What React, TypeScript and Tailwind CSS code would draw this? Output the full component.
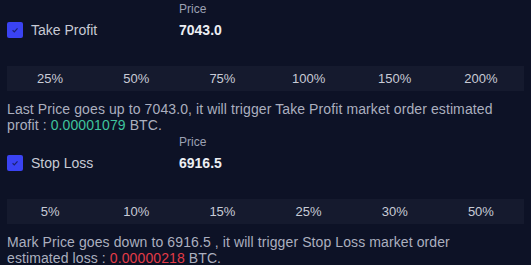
import React from "react";

function Check() {
  return (
    <div className="w-4 h-4 rounded-[2px] bg-[#3a43f3] flex items-center justify-center">
      <svg width="10" height="10" viewBox="0 0 10 10" fill="none">
        <path d="M2.6 5.3 L4.3 6.9 L7.5 3.4" stroke="#1c2270" strokeWidth="1.2" />
      </svg>
    </div>
  );
}

function Section({
  label,
  price,
  pcts,
  line1,
  line2,
  value,
  valueColor,
}: {
  label: string;
  price: string;
  pcts: string[];
  line1: string;
  line2: string;
  value: string;
  valueColor: string;
}) {
  return (
    <div className="flex flex-col h-[133px]">
      <div className="flex">
        <div className="w-[172px]" />
        <span className="text-[12px] text-[#9ca1b3] leading-[18px] h-[18px]">Price</span>
      </div>
      <div className="flex items-center h-[24px]">
        <div className="flex items-center gap-2 w-[172px]">
          <Check />
          <span className="text-[14px] text-[#c7cad5] leading-[18px]">{label}</span>
        </div>
        <span className="text-[14px] font-bold text-[#eceef3] leading-[18px]">{price}</span>
      </div>
      <div className="mt-[24px] grid grid-cols-6 h-[25px] bg-[#151a2e]">
        {pcts.map((p) => (
          <div key={p} className="flex items-center justify-center text-[13px] text-[#c8cbd6]">
            {p}
          </div>
        ))}
      </div>
      <div className="mt-[10px] text-[14px] leading-[16px] tracking-[0.1px] text-[#abafbf]">
        <div className="whitespace-nowrap">{line1}</div>
        <div className="whitespace-nowrap">
          {line2}
          <span className={valueColor}>{value}</span> BTC.
        </div>
      </div>
    </div>
  );
}

export default function App() {
  return (
    <div
      className="w-[531px] h-[265px] bg-[#0d1226] pl-[7px] pr-[7px] overflow-hidden flex flex-col"
      style={{ fontFamily: '"Liberation Sans", Arial, sans-serif' }}
    >
      <Section
        label="Take Profit"
        price="7043.0"
        pcts={["25%", "50%", "75%", "100%", "150%", "200%"]}
        line1="Last Price goes up to 7043.0, it will trigger Take Profit market order estimated"
        line2="profit : "
        value="0.00001079"
        valueColor="text-[#3fc49d]"
      />
      <Section
        label="Stop Loss"
        price="6916.5"
        pcts={["5%", "10%", "15%", "25%", "30%", "50%"]}
        line1="Mark Price goes down to 6916.5 , it will trigger Stop Loss market order"
        line2="estimated loss : "
        value="0.00000218"
        valueColor="text-[#e23b46]"
      />
    </div>
  );
}
